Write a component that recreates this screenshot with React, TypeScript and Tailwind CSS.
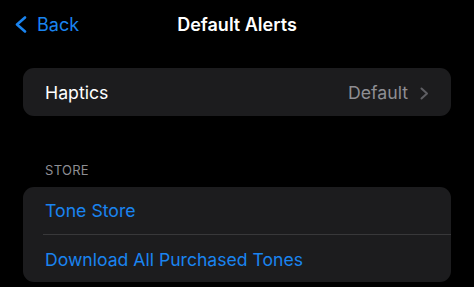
import React from "react";

export default function App() {
  const font = { fontFamily: "Inter, 'Noto Sans', sans-serif" };
  return (
    <div className="w-[474px] h-[287px] bg-black overflow-hidden" style={font}>
      <div className="grid grid-cols-[1fr_auto_1fr] items-center h-[48px] pt-[1px]">
        <div className="flex items-center pl-[14px] text-[#1a84f0]">
          <svg width="13" height="17" viewBox="0 0 13 17" className="mr-[10px]">
            <path d="M11 1.5 L3 8.5 L11 15.5" fill="none" stroke="#1a84f0" strokeWidth="2.6" strokeLinecap="round" strokeLinejoin="round" />
          </svg>
          <span className="text-[18px] leading-none">Back</span>
        </div>
        <div className="text-white text-[18px] font-semibold leading-none">Default Alerts</div>
        <div />
      </div>
      <div className="px-[23px] pt-[20px]">
        <div className="bg-[#1c1c1e] rounded-[11px] h-[48px] flex items-center pl-[22px] pr-[22px] pt-[2px]">
          <span className="text-white text-[17.7px] leading-none flex-1">Haptics</span>
          <span className="text-[#8e8e93] text-[17.7px] leading-none">Default</span>
          <svg width="9" height="13" viewBox="0 0 9 13" className="ml-[12px]">
            <path d="M1.5 1.5 L7 6.5 L1.5 11.5" fill="none" stroke="#5e5e63" strokeWidth="2" strokeLinecap="round" strokeLinejoin="round" />
          </svg>
        </div>
        <div className="pt-[48px] pb-[10px] pl-[22px] text-[#8d8d92] text-[13px] leading-none tracking-[0.3px]">STORE</div>
        <div className="bg-[#1c1c1e] rounded-[11px] overflow-hidden">
          <div className="h-[47px] flex items-center pl-[22px] pt-[1px]">
            <span className="text-[#1a84f0] text-[17.7px] leading-none">Tone Store</span>
          </div>
          <div className="ml-[20px] h-[1px] bg-[#38383a]" />
          <div className="h-[47px] flex items-center pl-[22px] pt-[2px]">
            <span className="text-[#1a84f0] text-[17.6px] leading-none">Download All Purchased Tones</span>
          </div>
        </div>
      </div>
    </div>
  );
}
